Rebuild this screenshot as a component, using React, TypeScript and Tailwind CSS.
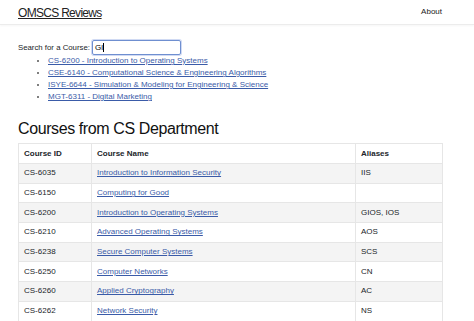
import React from "react";

const suggestions = [
  "CS-6200 - Introduction to Operating Systems",
  "CSE-6140 - Computational Science & Engineering Algorithms",
  "ISYE-6644 - Simulation & Modeling for Engineering & Science",
  "MGT-6311 - Digital Marketing",
];

const rows: [string, string, string][] = [
  ["CS-6035", "Introduction to Information Security", "IIS"],
  ["CS-6150", "Computing for Good", ""],
  ["CS-6200", "Introduction to Operating Systems", "GIOS, IOS"],
  ["CS-6210", "Advanced Operating Systems", "AOS"],
  ["CS-6238", "Secure Computer Systems", "SCS"],
  ["CS-6250", "Computer Networks", "CN"],
  ["CS-6260", "Applied Cryptography", "AC"],
  ["CS-6262", "Network Security", "NS"],
];

export default function App() {
  return (
    <div
      className="w-[474px] h-[321px] overflow-hidden bg-white text-[#212529]"
      style={{ fontFamily: '"Liberation Sans", Arial, sans-serif' }}
    >
      <header className="h-[25px] border-b border-[#ececec] shadow-[0_1px_2px_rgba(0,0,0,0.04)] flex items-center justify-between pl-[18px] pr-[32px]">
        <a className="text-[12px] tracking-[-0.7px] underline text-[#222] leading-none pt-[1px]">OMSCS Reviews</a>
        <span className="text-[8px] text-[#222]">About</span>
      </header>
      <div className="pl-[18px] pt-[15px]">
        <div className="flex items-center h-[15px] text-[7.8px]">
          <span className="mr-[2px]">Search for a Course:</span>
          <div className="w-[89px] h-[15px] border border-[#6f8fd0] rounded-[2px] shadow-[0_0_0_1px_rgba(120,150,220,0.35)] flex items-center pl-[2px] text-[8px] text-black">
            Gl<span className="w-px h-[9px] bg-black" />
          </div>
        </div>
        <ul className="mt-[0px] pl-[30px] text-[8px] leading-[12px] list-disc marker:text-[#555]">
          {suggestions.map((s) => (
            <li key={s}>
              <a className="text-[#3a5ba8] underline">{s}</a>
            </li>
          ))}
        </ul>
        <h2 className="mt-[16px] text-[16px] tracking-[-0.4px] leading-[20px] text-[#111]">
          Courses from CS Department
        </h2>
        <table className="mt-[4px] w-[424px] border-collapse text-[8px] table-fixed">
          <colgroup>
            <col className="w-[73px]" />
            <col className="w-[264px]" />
            <col className="w-[87px]" />
          </colgroup>
          <thead>
            <tr className="h-[20px] bg-white">
              <th className="border border-[#e6e6e6] text-left font-bold px-[5px]">Course ID</th>
              <th className="border border-[#e6e6e6] text-left font-bold px-[5px]">Course Name</th>
              <th className="border border-[#e6e6e6] text-left font-bold px-[5px]">Aliases</th>
            </tr>
          </thead>
          <tbody>
            {rows.map((r, i) => (
              <tr key={r[0]} className={`h-[19.7px] ${i % 2 === 0 ? "bg-[#f4f4f4]" : "bg-white"}`}>
                <td className="border border-[#e6e6e6] px-[5px] py-0">{r[0]}</td>
                <td className="border border-[#e6e6e6] px-[5px] py-0">
                  <a className="text-[#3a5ba8] underline">{r[1]}</a>
                </td>
                <td className="border border-[#e6e6e6] px-[5px] py-0">{r[2]}</td>
              </tr>
            ))}
          </tbody>
        </table>
      </div>
    </div>
  );
}
